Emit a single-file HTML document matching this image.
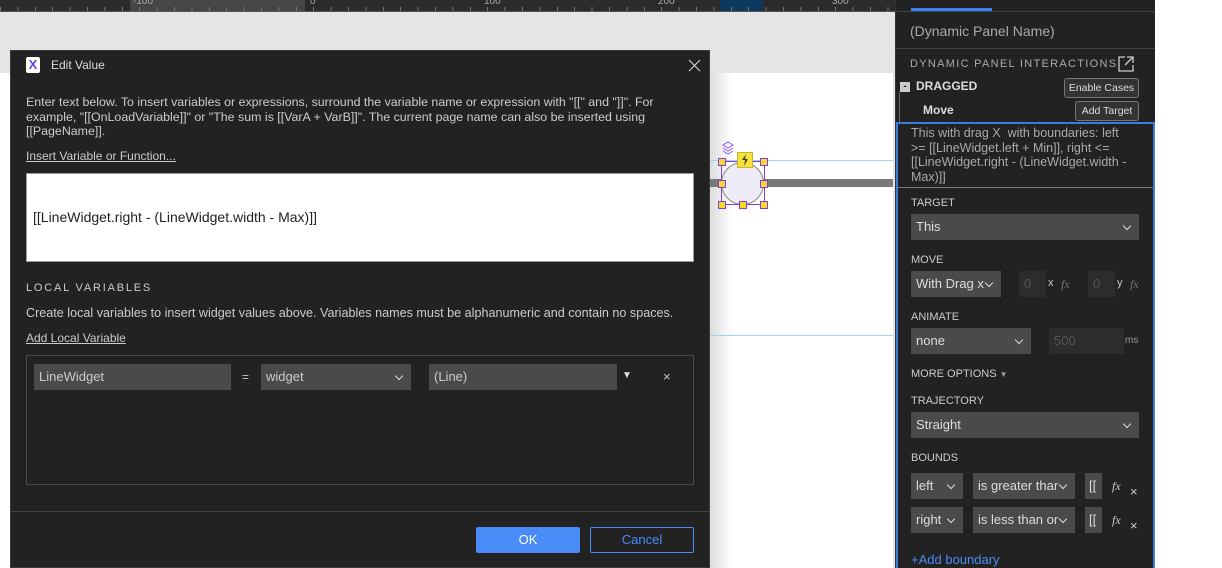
<!DOCTYPE html><html><head><meta charset="utf-8"><style>
*{box-sizing:border-box;margin:0;padding:0}
body{width:1222px;height:568px;overflow:hidden;position:relative;background:#fff;font-family:"Liberation Sans",sans-serif;font-size:13px}
.a{position:absolute;white-space:nowrap}
.sel{position:absolute;background:#4a4a4a;color:#ddd;font-size:13px;padding-left:5px;line-height:25px}
.sel:after{content:"";position:absolute;right:9px;top:9px;width:5px;height:5px;border-right:1.5px solid #ddd;border-bottom:1.5px solid #ddd;transform:rotate(45deg)}
.lbl{position:absolute;color:#ccc;font-size:11px}
.inp{position:absolute;background:#2c2c2c;color:#555;font-size:13px;padding-left:5px;line-height:25px}
.fx{position:absolute;color:#777;font-style:italic;font-family:"Liberation Serif",serif;font-size:12px}
.h{position:absolute;width:8px;height:8px;background:#f7d924;border:1.5px solid #7b3fe4}
</style></head><body>
<div class="a" style="left:0;top:0;width:895px;height:12px;background:#2b2b2b;border-bottom:1px solid #555"></div>
<div class="a" style="left:130px;top:0;width:175px;height:11px;background:#464646"></div>
<div class="a" style="left:720px;top:0;width:43px;height:11px;background:#0c3a5e"></div>
<div class="a" style="left:133px;top:-4px;color:#aaa;font-size:10px">-100</div>
<div class="a" style="left:310px;top:-4px;color:#aaa;font-size:10px">0</div>
<div class="a" style="left:484px;top:-4px;color:#aaa;font-size:10px">100</div>
<div class="a" style="left:658px;top:-4px;color:#aaa;font-size:10px">200</div>
<div class="a" style="left:832px;top:-4px;color:#aaa;font-size:10px">300</div>
<div class="a" style="left:0;top:7px;width:895px;height:4px;background:repeating-linear-gradient(90deg,#777 0 1px,transparent 1px 17.4px)"></div>
<div class="a" style="left:0;top:12px;width:895px;height:556px;background:#e5e5e5"></div>
<div class="a" style="left:0;top:73px;width:893px;height:495px;background:#fff"></div>
<div class="a" style="left:710px;top:73px;width:22px;height:495px;background:linear-gradient(90deg,#ddd,#fff)"></div>
<div class="a" style="left:710px;top:160px;width:183px;height:1px;background:#9dd3f0"></div>
<div class="a" style="left:710px;top:335px;width:183px;height:1px;background:#9dd3f0"></div>
<div class="a" style="left:710px;top:179px;width:183px;height:8px;background:#7a7a7a"></div>
<div class="a" style="left:721px;top:162px;width:43px;height:43px;border-radius:50%;background:#efebf8;border:1.5px solid #888"></div>
<div class="a" style="left:721px;top:161px;width:44px;height:44px;border:1.5px solid #7b3fe4"></div>
<div class="h" style="left:718px;top:158px"></div><div class="h" style="left:760px;top:158px"></div>
<div class="h" style="left:718px;top:180px"></div><div class="h" style="left:760px;top:180px"></div>
<div class="h" style="left:718px;top:201px"></div><div class="h" style="left:739px;top:201px"></div><div class="h" style="left:760px;top:201px"></div>
<div class="a" style="left:737px;top:152px;width:16px;height:16px;background:#f7e23a;border:1px solid #c8b22a"></div>
<svg class="a" style="left:740px;top:154px" width="10" height="12"><path d="M6 0L2 6h3l-1 6 4-7H5z" fill="#444"/></svg>
<svg class="a" style="left:721px;top:141px" width="14" height="14" viewBox="0 0 14 14" fill="none" stroke="#8a5cf0" stroke-width="1"><path d="M7 1L12 4 7 7 2 4Z"/><path d="M2 7l5 3 5-3"/><path d="M2 10l5 3 5-3"/></svg>
<div class="a" style="left:10px;top:50px;width:700px;height:518px;background:#222;border:1px solid #3a3a3a"></div>
<div class="a" style="left:26px;top:57px;width:14px;height:16px;background:#fff;border-radius:2px;color:#6b3de0;font-size:13px;font-weight:bold;text-align:center;line-height:16px">X</div>
<div class="a" style="left:51px;top:58px;color:#ddd;font-size:12px">Edit Value</div>
<svg class="a" style="left:688px;top:59px" width="13" height="13"><path d="M1 1L12 12M12 1L1 12" stroke="#ccc" stroke-width="1.2"/></svg>
<div class="a" style="left:26px;top:95px;width:665px;white-space:normal;color:#ccc;font-size:12.4px;line-height:14.5px">Enter text below. To insert variables or expressions, surround the variable name or expression with "[[" and "]]". For example, "[[OnLoadVariable]]" or "The sum is [[VarA + VarB]]". The current page name can also be inserted using [[PageName]].</div>
<div class="a" style="left:26px;top:149px;color:#ccc;font-size:12px;text-decoration:underline">Insert Variable or Function...</div>
<div class="a" style="left:26px;top:173px;width:668px;height:89px;background:#fff;border:1px solid #999"></div>
<div class="a" style="left:33px;top:209px;color:#222;font-size:14px">[[LineWidget.right - (LineWidget.width - Max)]]</div>
<div class="a" style="left:26px;top:282px;color:#ccc;font-size:11px;letter-spacing:1.8px">LOCAL VARIABLES</div>
<div class="a" style="left:26px;top:306px;color:#ccc;font-size:12.6px">Create local variables to insert widget values above. Variables names must be alphanumeric and contain no spaces.</div>
<div class="a" style="left:26px;top:331px;color:#ccc;font-size:12px;text-decoration:underline">Add Local Variable</div>
<div class="a" style="left:26px;top:355px;width:668px;height:130px;border:1px solid #4a4a4a"></div>
<div class="a" style="left:34px;top:364px;width:197px;height:26px;background:#4a4a4a;color:#ccc;padding-left:5px;line-height:26px">LineWidget</div>
<div class="a" style="left:242px;top:370px;color:#ccc;font-size:12px">=</div>
<div class="sel" style="left:261px;top:364px;width:150px;height:26px;color:#ccc">widget</div>
<div class="a" style="left:429px;top:364px;width:188px;height:26px;background:#4a4a4a;color:#ccc;padding-left:5px;line-height:26px">(Line)</div>
<div class="a" style="left:622px;top:370px;color:#ddd;font-size:10px">▼</div>
<div class="a" style="left:663px;top:369px;color:#ccc;font-size:13px">×</div>
<div class="a" style="left:11px;top:511px;width:698px;height:1px;background:#444"></div>
<div class="a" style="left:476px;top:527px;width:104px;height:26px;background:#4a8cf7;border-radius:2px;color:#fff;text-align:center;line-height:26px">OK</div>
<div class="a" style="left:590px;top:527px;width:104px;height:26px;border:1px solid #4a8cf7;border-radius:2px;color:#4a8cf7;text-align:center;line-height:24px">Cancel</div>
<div class="a" style="left:895px;top:0;width:260px;height:568px;background:#222;border-left:1px solid #333"></div>
<div class="a" style="left:911px;top:8px;width:81px;height:3px;background:#3b82f6"></div>
<div class="a" style="left:895px;top:11px;width:260px;height:1px;background:#444"></div>
<div class="a" style="left:910px;top:23px;color:#aaa;font-size:14px">(Dynamic Panel Name)</div>
<div class="a" style="left:895px;top:48px;width:260px;height:1px;background:#444"></div>
<div class="a" style="left:910px;top:58px;color:#aaa;font-size:11px;letter-spacing:1.3px">DYNAMIC PANEL INTERACTIONS</div>
<svg class="a" style="left:1118px;top:56px" width="16" height="16" fill="none" stroke="#ccc" stroke-width="1.3"><path d="M7 1H1V15H15V9M9 1H15V7M15 1L7 9"/></svg>
<div class="a" style="left:900px;top:82px;width:10px;height:10px;background:#ccc;color:#222;font-size:10px;line-height:9px;text-align:center;font-weight:bold">-</div>
<div class="a" style="left:899px;top:92px;width:1px;height:30px;background:#666"></div>
<div class="a" style="left:916px;top:79px;color:#ddd;font-size:12px;font-weight:bold">DRAGGED</div>
<div class="a" style="left:1064px;top:78px;width:75px;height:20px;border:1px solid #777;border-radius:3px;background:#333;color:#ddd;font-size:10.5px;text-align:center;line-height:18px">Enable Cases</div>
<div class="a" style="left:923px;top:103px;color:#ddd;font-size:12px;font-weight:bold">Move</div>
<div class="a" style="left:1075px;top:101px;width:64px;height:20px;border:1px solid #777;border-radius:3px;background:#333;color:#ddd;font-size:10.5px;text-align:center;line-height:18px">Add Target</div>
<div class="a" style="left:896px;top:122px;width:259px;height:446px;border:2px solid #3b7ddd;border-bottom:none"></div>
<div class="a" style="left:911px;top:126px;width:220px;white-space:normal;color:#aaa;font-size:12.5px;line-height:14.5px">This with drag X&nbsp; with boundaries: left &gt;= [[LineWidget.left + Min]], right &lt;= [[LineWidget.right - (LineWidget.width - Max)]]</div>
<div class="a" style="left:898px;top:187px;width:255px;height:1px;background:#777"></div>
<div class="lbl" style="left:911px;top:197px">TARGET</div>
<div class="sel" style="left:911px;top:214px;width:228px;height:26px">This</div>
<div class="lbl" style="left:911px;top:254px">MOVE</div>
<div class="sel" style="left:911px;top:271px;width:90px;height:26px">With Drag x</div>
<div class="inp" style="left:1019px;top:271px;width:27px;height:26px">0</div>
<div class="a" style="left:1048px;top:277px;color:#ccc;font-size:11px">x</div>
<div class="fx" style="left:1061px;top:277px">fx</div>
<div class="inp" style="left:1088px;top:271px;width:27px;height:26px">0</div>
<div class="a" style="left:1117px;top:277px;color:#ccc;font-size:11px">y</div>
<div class="fx" style="left:1130px;top:277px">fx</div>
<div class="lbl" style="left:911px;top:311px">ANIMATE</div>
<div class="sel" style="left:911px;top:328px;width:120px;height:26px">none</div>
<div class="inp" style="left:1049px;top:328px;width:75px;height:26px">500</div>
<div class="a" style="left:1125px;top:335px;color:#999;font-size:10px">ms</div>
<div class="lbl" style="left:911px;top:368px">MORE OPTIONS <span style="font-size:8px;color:#999">▼</span></div>
<div class="lbl" style="left:911px;top:395px">TRAJECTORY</div>
<div class="sel" style="left:911px;top:412px;width:228px;height:26px">Straight</div>
<div class="lbl" style="left:911px;top:452px">BOUNDS</div>
<div class="sel" style="left:911px;top:473px;width:52px;height:26px">left</div>
<div class="sel" style="left:973px;top:473px;width:102px;height:26px;overflow:hidden">is greater thar</div>
<div class="a" style="left:1085px;top:473px;width:17px;height:26px;background:#4a4a4a;color:#ddd;padding-left:4px;line-height:26px">[[</div>
<div class="fx" style="left:1112px;top:479px;color:#ccc">fx</div>
<div class="a" style="left:1130px;top:484px;color:#ccc;font-size:13px">×</div>
<div class="sel" style="left:911px;top:507px;width:52px;height:26px">right</div>
<div class="sel" style="left:973px;top:507px;width:102px;height:26px;overflow:hidden">is less than or</div>
<div class="a" style="left:1085px;top:507px;width:17px;height:26px;background:#4a4a4a;color:#ddd;padding-left:4px;line-height:26px">[[</div>
<div class="fx" style="left:1112px;top:513px;color:#ccc">fx</div>
<div class="a" style="left:1130px;top:518px;color:#ccc;font-size:13px">×</div>
<div class="a" style="left:911px;top:552px;color:#4a8cf7;font-size:13px">+Add boundary</div>
</body></html>
